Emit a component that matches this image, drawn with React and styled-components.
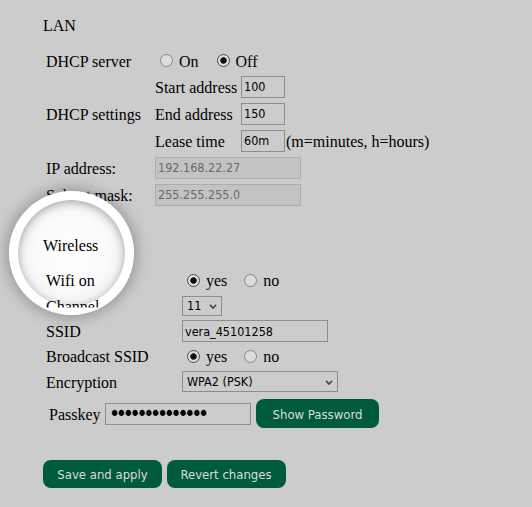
import React from 'react';
import styled, { createGlobalStyle } from 'styled-components';

const uiFont = `"DejaVu Sans Condensed", "DejaVu Sans", sans-serif`;

const Global = createGlobalStyle`
  html, body { margin: 0; padding: 0; background: #cccccc; }
  body {
    font-family: "Liberation Serif", "Times New Roman", serif;
    font-size: 16px;
    line-height: 18px;
    color: #000;
  }
`;

const Page = styled.div`
  position: relative;
  width: 532px;
  height: 507px;
  overflow: hidden;
  box-sizing: border-box;
  padding: 17px 0 0 43px;
`;

const SectionTitle = styled.div`
  position: relative;
  z-index: ${p => (p.$raised ? 3 : 'auto')};
  margin-top: ${p => p.$gap || 0}px;
  height: 18px;
  width: max-content;
`;

const FormGrid = styled.div`
  display: grid;
  grid-template-columns: ${p => p.$cols};
  grid-template-rows: ${p => p.$rows};
  align-items: center;
  margin-top: ${p => p.$top}px;
`;

const Label = styled.div`
  position: relative;
  z-index: ${p => (p.$raised ? 3 : 'auto')};
  padding-left: ${p => (p.$sub ? 0 : 3)}px;
  padding-top: 2px;
  white-space: nowrap;
  grid-row: ${p => p.$row || 'auto'};
  grid-column: ${p => p.$col || 'auto'};
  width: max-content;
  clip-path: ${p => (p.$clip ? `inset(0 0 ${p.$clip}px 0)` : 'none')};
`;

const Cell = styled.div`
  display: flex;
  align-items: center;
  grid-column: ${p => p.$col || 'auto'};
`;

const TextInput = styled.input`
  box-sizing: border-box;
  width: ${p => p.$w}px;
  height: 22px;
  margin: 0;
  border: 1px solid #8d8d8d;
  background: transparent;
  padding: 0 2px;
  font: 12.5px ${uiFont};
  color: #000;
  outline: none;
  &:disabled {
    background: #c3c3c3;
    border-color: #adadad;
    color: #6a6a6a;
  }
  &[type='password'] {
    font-size: 21px;
    letter-spacing: -4.3px;
    padding-left: 3px;
  }
`;

const Note = styled.span`
  margin-left: 1px;
  padding-top: 2px;
  white-space: nowrap;
`;

const RadioGroup = styled.div`
  display: flex;
  align-items: center;
  gap: ${p => p.$gap}px;
`;

const RadioOption = styled.label`
  display: flex;
  align-items: center;
`;

const RadioText = styled.span`
  padding-top: 2px;
`;

const Radio = styled.input.attrs({ type: 'radio' })`
  appearance: none;
  box-sizing: border-box;
  width: 13px;
  height: 13px;
  margin: 0 6px 0 5px;
  border-radius: 50%;
  border: 1px solid ${p => (p.checked ? '#4d4d4d' : '#858585')};
  background: ${p =>
    p.checked
      ? 'radial-gradient(circle, #111 0 2.9px, #dcdcdc 3.5px)'
      : '#dcdcdc'};
`;

const SelectBox = styled.div`
  position: relative;
  width: ${p => p.$w}px;
  height: ${p => p.$h}px;
`;

const Select = styled.select`
  appearance: none;
  box-sizing: border-box;
  width: 100%;
  height: 100%;
  margin: 0;
  border: 1px solid #8d8d8d;
  border-radius: 0;
  background: transparent;
  padding: 0 0 0 4px;
  font: 12.5px ${uiFont};
  color: #000;
  outline: none;
`;

const Chevron = styled.svg`
  position: absolute;
  right: 5px;
  top: 50%;
  margin-top: -2px;
  pointer-events: none;
`;

const PasskeyRow = styled.div`
  display: flex;
  align-items: center;
  height: 29px;
  margin-top: 4.5px;
  padding-left: 6px;
`;

const PasskeyLabel = styled.span`
  width: 56px;
  padding-top: 2px;
`;

const Button = styled.button`
  box-sizing: border-box;
  width: ${p => p.$w}px;
  height: ${p => p.$h}px;
  margin: 0 0 0 ${p => p.$ml || 0}px;
  padding: 1px 0 0;
  border: none;
  border-radius: 8px;
  background: #005a3c;
  color: #dcdcdc;
  font: 13px ${uiFont};
  cursor: pointer;
`;

const Actions = styled.div`
  display: flex;
  gap: 4.5px;
  margin-top: 32px;
`;

const Spotlight = styled.div`
  position: absolute;
  left: 9px;
  top: 191px;
  width: 125px;
  height: 124px;
  box-sizing: border-box;
  border: 9px solid #fff;
  border-radius: 50%;
  z-index: 2;
  background: radial-gradient(circle, #ffffff 0%, #fafafa 50%, #e2e2e2 100%);
  box-shadow: 0 0 14px 3px rgba(0, 0, 0, 0.26), inset 0 2px 9px rgba(0, 0, 0, 0.32);
`;

function ChevronIcon() {
  return (
    <Chevron width="8" height="5" viewBox="0 0 8 5">
      <path d="M1 0.9 L4 4 L7 0.9" fill="none" stroke="#4a4a4a" strokeWidth="1.7" />
    </Chevron>
  );
}

function RadioPair({ name, a, b, checked, gap }) {
  return (
    <RadioGroup $gap={gap}>
      <RadioOption>
        <Radio name={name} checked={checked === 0} readOnly />
        <RadioText>{a}</RadioText>
      </RadioOption>
      <RadioOption>
        <Radio name={name} checked={checked === 1} readOnly />
        <RadioText>{b}</RadioText>
      </RadioOption>
    </RadioGroup>
  );
}

export default function App() {
  return (
    <>
      <Global />
      <Page>
        <SectionTitle>LAN</SectionTitle>
        <FormGrid $cols="112px 86px 1fr" $rows="25px 27px 27px 27px 27px 27px" $top={13}>
          <Label>DHCP server</Label>
          <Cell $col="2 / 4">
            <RadioPair name="dhcp" a="On" b="Off" checked={1} gap={13} />
          </Cell>

          <Label $row="2 / 5" $col="1">DHCP settings</Label>
          <Label $sub $row="2" $col="2">Start address</Label>
          <Cell $col="3"><TextInput $w={44} defaultValue="100" /></Cell>
          <Label $sub $row="3" $col="2">End address</Label>
          <Cell $col="3"><TextInput $w={44} defaultValue="150" /></Cell>
          <Label $sub $row="4" $col="2">Lease time</Label>
          <Cell $col="3">
            <TextInput $w={44} defaultValue="60m" />
            <Note>(m=minutes, h=hours)</Note>
          </Cell>

          <Label>IP address:</Label>
          <Cell $col="2 / 4"><TextInput $w={146} defaultValue="192.168.22.27" disabled /></Cell>
          <Label>Subnet mask:</Label>
          <Cell $col="2 / 4"><TextInput $w={146} defaultValue="255.255.255.0" disabled /></Cell>
        </FormGrid>

        <SectionTitle $raised $gap={29}>Wireless</SectionTitle>
        <FormGrid $cols="139px 1fr" $rows="25px 26px 25px 25px 26px" $top={12.5}>
          <Label $raised>Wifi on</Label>
          <Cell><RadioPair name="wifi" a="yes" b="no" checked={0} gap={12} /></Cell>

          <Label $raised $clip={8}>Channel</Label>
          <Cell>
            <SelectBox $w={40} $h={20}>
              <Select defaultValue="11">
                <option value="11">11</option>
              </Select>
              <ChevronIcon />
            </SelectBox>
          </Cell>

          <Label>SSID</Label>
          <Cell><TextInput $w={146} defaultValue="vera_45101258" /></Cell>

          <Label>Broadcast SSID</Label>
          <Cell><RadioPair name="bcast" a="yes" b="no" checked={0} gap={12} /></Cell>

          <Label>Encryption</Label>
          <Cell>
            <SelectBox $w={156} $h={21}>
              <Select defaultValue="wpa2">
                <option value="wpa2">WPA2 (PSK)</option>
              </Select>
              <ChevronIcon />
            </SelectBox>
          </Cell>
        </FormGrid>

        <PasskeyRow>
          <PasskeyLabel>Passkey</PasskeyLabel>
          <TextInput type="password" $w={146} defaultValue="vera45101258ab" />
          <Button $w={123} $h={29} $ml={5}>Show Password</Button>
        </PasskeyRow>

        <Actions>
          <Button $w={119} $h={28}>Save and apply</Button>
          <Button $w={119} $h={28}>Revert changes</Button>
        </Actions>

        <Spotlight />
      </Page>
    </>
  );
}
